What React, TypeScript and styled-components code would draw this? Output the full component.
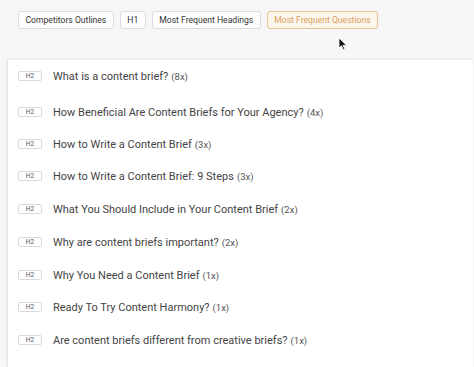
import React from "react";
import styled, { createGlobalStyle } from "styled-components";

const Global = createGlobalStyle`
  html, body { margin: 0; padding: 0; background: #f7f7f7; }
  body { font-family: Roboto, "Liberation Sans", Arial, sans-serif; }
`;

const Page = styled.div`
  position: relative;
  width: 474px;
  height: 367px;
  overflow: hidden;
  background: #f7f7f7;
  display: flex;
  flex-direction: column;
`;

const Toolbar = styled.div`
  display: flex;
  align-items: flex-start;
  gap: 6px;
  padding: 11px 0 0 18px;
  height: 48px;
  box-sizing: border-box;
`;

const Tab = styled.button<{ $active?: boolean }>`
  height: 18px;
  padding: 0 6.5px;
  font-family: Roboto, "Liberation Sans", Arial, sans-serif;
  font-size: 8.6px;
  color: ${(p) => (p.$active ? "#d9a05e" : "#333333")};
  background: ${(p) => (p.$active ? "#fdf6ec" : "#ffffff")};
  border: 1px solid ${(p) => (p.$active ? "#e8c48f" : "#dcdcdc")};
  border-radius: 3px;
  line-height: 16px;
  cursor: pointer;
`;

const Panel = styled.div`
  flex: 1;
  margin: 11px 1px 0 7px;
  background: #ffffff;
  border-top: 1px solid #ececec;
  border-left: 1px solid #e6e6e6;
  box-shadow: -1px 0 2px rgba(0, 0, 0, 0.04);
  display: flex;
  flex-direction: column;
  padding: 6px 0 0 10px;
`;

const Row = styled.div<{ $gap: number }>`
  display: flex;
  align-items: center;
  height: 20px;
  margin-top: ${(p) => p.$gap}px;
`;

const Badge = styled.span`
  width: 24px;
  height: 10px;
  box-sizing: border-box;
  border: 1px solid #dadada;
  border-radius: 2px;
  font-size: 6.5px;
  color: #555;
  display: flex;
  align-items: center;
  justify-content: center;
  margin-right: 11px;
`;

const Title = styled.span`
  font-size: 11px;
  color: #444444;
  white-space: nowrap;
`;

const Count = styled.span`
  font-size: 9.5px;
  color: #555;
  margin-left: 3px;
`;

const Cursor = styled.svg`
  position: absolute;
  left: 338px;
  top: 37px;
`;

const items: [string, string, number][] = [
  ["What is a content brief?", "(8x)", 0],
  ["How Beneficial Are Content Briefs for Your Agency?", "(4x)", 16],
  ["How to Write a Content Brief", "(3x)", 12],
  ["How to Write a Content Brief: 9 Steps", "(3x)", 12],
  ["What You Should Include in Your Content Brief", "(2x)", 13],
  ["Why are content briefs important?", "(2x)", 13],
  ["Why You Need a Content Brief", "(1x)", 13],
  ["Ready To Try Content Harmony?", "(1x)", 12],
  ["Are content briefs different from creative briefs?", "(1x)", 13],
];

export default function App() {
  return (
    <Page>
      <Global />
      <Toolbar>
        <Tab>Competitors Outlines</Tab>
        <Tab>H1</Tab>
        <Tab>Most Frequent Headings</Tab>
        <Tab $active>Most Frequent Questions</Tab>
      </Toolbar>
      <Panel>
        {items.map(([t, c, g]) => (
          <Row key={t} $gap={g}>
            <Badge>H2</Badge>
            <Title>{t}</Title>
            <Count>{c}</Count>
          </Row>
        ))}
      </Panel>
      <Cursor width="10" height="14" viewBox="0 0 10 14">
        <path d="M1 1 L1 11 L3.5 8.8 L5.5 13 L7 12.3 L5 8.3 L8.5 8.3 Z" fill="#111" stroke="#fff" strokeWidth="0.8" />
      </Cursor>
    </Page>
  );
}
